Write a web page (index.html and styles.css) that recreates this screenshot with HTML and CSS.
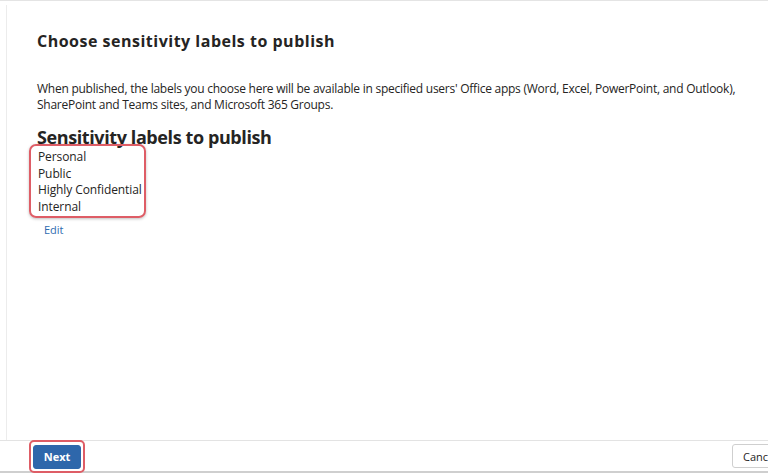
FILE: index.html
```html
<!DOCTYPE html>
<html lang="en">
<head>
    <meta charset="UTF-8">
    <meta name="viewport" content="width=device-width, initial-scale=1.0">
    <title>Publish labels</title>
    <link rel="stylesheet" href="styles.css">
</head>
<body>
    <div class="ventana">
        <div class="panel">
            <h1 class="titulo">Choose sensitivity labels to publish</h1>
            <p class="texto">When published, the labels you choose here will be available in specified users' Office apps (Word, Excel, PowerPoint, and Outlook), SharePoint and Teams sites, and Microsoft 365 Groups.</p>
            <h2 class="subtitulo">Sensitivity labels to publish</h2>
            <div class="etiquetas">
                <div>Personal</div>
                <div>Public</div>
                <div>Highly Confidential</div>
                <div>Internal</div>
            </div>
            <a class="editar" href="#">Edit</a>
        </div>
        <div class="pie">
            <span class="marca"><button class="btn siguiente" type="button">Next</button></span>
            <button class="btn cancelar" type="button">Cancel</button>
        </div>
    </div>
</body>
</html>
```

FILE: styles.css
```css
*{
    box-sizing: border-box;
    margin: 0;
    padding: 0;
}
body{
    width: 768px;
    height: 473px;
    overflow: hidden;
    background-color: #fff;
    font-family: "Open Sans", "Noto Sans", sans-serif;
    color: #252423;
}
.ventana{
    height: 473px;
    border-top: 1px solid #e4e4e4;
    border-bottom: 2px solid #cfcfcf;
    display: flex;
    flex-direction: column;
}
.panel{
    flex: 1;
    margin: 4px 0 0 6px;
    border-left: 1px solid #ececec;
    padding: 25px 0 0 30px;
}
.titulo{
    font-size: 16px;
    font-weight: 700;
    line-height: 22px;
    letter-spacing: 0.5px;
}
.texto{
    margin-top: 29px;
    font-size: 12px;
    line-height: 16px;
    width: 720px;
    letter-spacing: -0.25px;
}
.subtitulo{
    margin-top: 13px;
    font-size: 18px;
    font-weight: 700;
    line-height: 22px;
    letter-spacing: -0.4px;
}
.etiquetas{
    display: inline-block;
    margin: -4px 0 0 -8px;
    padding: 3px 2px 1px 7px;
    border: 2px solid #de5d66;
    border-radius: 7px;
    box-shadow: 0 1px 3px rgba(0,0,0,0.25);
    font-size: 12px;
    line-height: 16.5px;
    letter-spacing: -0.1px;
}
.editar{
    display: block;
    margin: 4px 0 0 7px;
    font-size: 11px;
    color: #2f6bb0;
    text-decoration: none;
}
.pie{
    height: 31px;
    border-top: 1px solid #e3e3e3;
    display: flex;
    align-items: center;
    justify-content: space-between;
    padding-left: 29px;
}
.marca{
    display: inline-block;
    padding: 2px;
    border: 2px solid #de5d66;
    border-radius: 5px;
    margin-top: 1px;
}
.btn{
    font-family: "Open Sans", "Noto Sans", sans-serif;
    font-size: 11px;
    border-radius: 3px;
    height: 24px;
}
.siguiente{
    width: 48px;
    background-color: #2e67ab;
    border: 1px solid #2e67ab;
    color: #fff;
    font-weight: 700;
}
.cancelar{
    width: 70px;
    margin-right: -34px;
    background-color: #fff;
    border: 1px solid #cfcfcf;
    color: #252423;
    text-align: left;
    padding-left: 10px;
}
```
